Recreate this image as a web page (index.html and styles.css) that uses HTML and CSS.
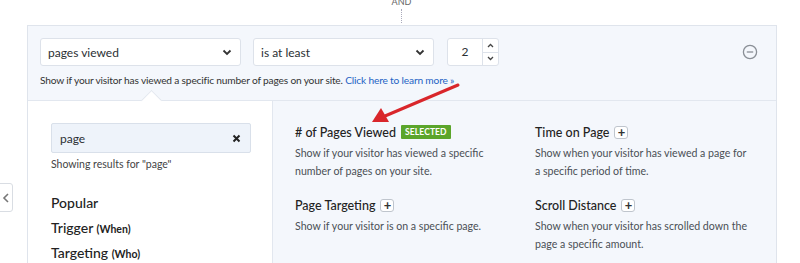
FILE: index.html
```html
<!DOCTYPE html>
<html lang="en">
<head>
  <meta charset="UTF-8" />
  <title>Rule Builder</title>
  <link rel="stylesheet" href="styles.css">
</head>
<body>

  <div class="joiner">
    <span class="joiner-label">AND</span>
    <span class="joiner-line"></span>
  </div>

  <div class="side-tab">
    <svg width="8" height="10" viewBox="0 0 8 10"><path d="M6 1 L2 5 L6 9" fill="none" stroke="#777" stroke-width="1.6"/></svg>
  </div>

  <div class="rule">
    <div class="rule-head">
      <div class="rule-row">
        <div class="select select-wide">
          <span>pages viewed</span>
          <svg class="caret" width="10" height="7" viewBox="0 0 10 7"><path d="M1.5 1.5 L5 5 L8.5 1.5" fill="none" stroke="#333" stroke-width="1.8"/></svg>
        </div>
        <div class="select select-mid">
          <span>is at least</span>
          <svg class="caret" width="10" height="7" viewBox="0 0 10 7"><path d="M1.5 1.5 L5 5 L8.5 1.5" fill="none" stroke="#333" stroke-width="1.8"/></svg>
        </div>
        <div class="number">
          <span class="number-value">2</span>
          <div class="spinner">
            <span><svg width="7" height="5" viewBox="0 0 7 5"><path d="M1 4 L3.5 1.5 L6 4" fill="none" stroke="#444" stroke-width="1.3"/></svg></span>
            <span><svg width="7" height="5" viewBox="0 0 7 5"><path d="M1 1 L3.5 3.5 L6 1" fill="none" stroke="#444" stroke-width="1.3"/></svg></span>
          </div>
        </div>
        <svg class="remove" width="16" height="16" viewBox="0 0 16 16">
          <circle cx="8" cy="8" r="6.6" fill="none" stroke="#8a8f96" stroke-width="1.3"/>
          <line x1="4.8" y1="8" x2="11.2" y2="8" stroke="#8a8f96" stroke-width="1.3"/>
        </svg>
      </div>
      <p class="help">Show if your visitor has viewed a specific number of pages on your site. <a href="#">Click here to learn more »</a></p>
    </div>

    <div class="picker">
      <div class="picker-side">
        <div class="search">
          <span>page</span>
          <svg width="9" height="9" viewBox="0 0 9 9"><path d="M1.5 1.5 L7.5 7.5 M7.5 1.5 L1.5 7.5" stroke="#222" stroke-width="2"/></svg>
        </div>
        <p class="search-note">Showing results for "page"</p>
        <ul class="cats">
          <li>Popular</li>
          <li>Trigger <small>(When)</small></li>
          <li>Targeting <small>(Who)</small></li>
        </ul>
      </div>

      <div class="picker-list">
        <div class="option">
          <h3># of Pages Viewed <span class="badge">SELECTED</span></h3>
          <p>Show if your visitor has viewed a specific number of pages on your site.</p>
        </div>
        <div class="option">
          <h3>Time on Page <span class="add">+</span></h3>
          <p>Show when your visitor has viewed a page for a specific period of time.</p>
        </div>
        <div class="option">
          <h3>Page Targeting <span class="add">+</span></h3>
          <p>Show if your visitor is on a specific page.</p>
        </div>
        <div class="option">
          <h3>Scroll Distance <span class="add">+</span></h3>
          <p>Show when your visitor has scrolled down the page a specific amount.</p>
        </div>
      </div>
    </div>
  </div>

  <!-- annotation arrow -->
  <svg class="arrow" width="800" height="263" viewBox="0 0 800 263">
    <line x1="458" y1="85" x2="385" y2="116" stroke="#d9262b" stroke-width="3" stroke-linecap="round"/>
    <path d="M372 122 L381 108 L389 122 Z" fill="#d9262b"/>
  </svg>

</body>
</html>
```

FILE: styles.css
```css
* {
  box-sizing: border-box;
}

body {
  margin: 0;
  background: #fff;
  font-family: 'Lato', 'Open Sans', sans-serif;
  color: #2b2f33;
  height: 263px;
  overflow: hidden;
  position: relative;
}

.joiner {
  height: 25px;
  display: flex;
  flex-direction: column;
  align-items: center;
  padding-left: 3px;
}

.joiner-label {
  font-size: 9px;
  color: #666;
  margin-top: -4px;
  line-height: 12px;
}

.joiner-line {
  width: 0;
  height: 14px;
  margin-top: 1px;
  border-left: 1px dotted #aab;
}

.side-tab {
  position: absolute;
  left: -1px;
  top: 183px;
  width: 14px;
  height: 29px;
  border: 1px solid #d9dde3;
  border-radius: 0 3px 3px 0;
  background: #fff;
  display: flex;
  align-items: center;
  justify-content: center;
}

.rule {
  margin-left: 27px;
  width: 750px;
  border: 1px solid #dfe4ec;
  background: #f4f7fc;
}

.rule-head {
  padding: 12px 12px 0;
  height: 75px;
  border-bottom: 1px solid #e2e7ef;
}

.rule-row {
  display: flex;
  align-items: center;
  gap: 12px;
}

.select {
  height: 28px;
  background: #fff;
  border: 1px solid #dde2ea;
  border-radius: 3px;
  display: flex;
  align-items: center;
  justify-content: space-between;
  padding: 0 8px 0 7px;
  font-size: 12px;
}

.select-wide {
  width: 201px;
}

.select-mid {
  width: 181px;
}

.number {
  margin-left: 1px;
  width: 52px;
  height: 28px;
  display: flex;
  background: #fff;
  border: 1px solid #dde2ea;
  border-radius: 3px;
}

.number-value {
  flex: 1;
  text-align: center;
  font-size: 12px;
  line-height: 26px;
}

.spinner {
  width: 16px;
  border-left: 1px solid #dde2ea;
  display: flex;
  flex-direction: column;
}

.spinner span {
  flex: 1;
  display: flex;
  align-items: center;
  justify-content: center;
}

.spinner span + span {
  border-top: 1px solid #dde2ea;
}

.remove {
  margin-left: auto;
  margin-right: 6px;
}

.help {
  margin: 8px 0 0;
  font-size: 10.2px;
  letter-spacing: -0.18px;
  color: #333;
}

.help a {
  color: #2563c4;
  text-decoration: none;
}

.picker {
  display: flex;
  height: 200px;
}

.picker-side {
  width: 245px;
  background: #fff;
  padding: 22px 21px 0 23px;
  border-right: 1px solid #e2e7ef;
  position: relative;
}

/* pointer up to the help text */
.picker-side::before {
  content: '';
  position: absolute;
  left: 116px;
  top: -8px;
  width: 14px;
  height: 14px;
  background: #fff;
  border-left: 1px solid #e2e7ef;
  border-top: 1px solid #e2e7ef;
  transform: rotate(45deg);
}

.search {
  height: 30px;
  background: #eef3fa;
  border: 1px solid #d9e0ea;
  border-radius: 2px;
  display: flex;
  align-items: center;
  justify-content: space-between;
  padding: 0 9px 0 8px;
  font-size: 12px;
}

.search-note {
  margin: 5px 0 0;
  font-size: 10.5px;
  color: #444;
}

.cats {
  list-style: none;
  margin: 21px 0 0;
  padding: 0;
}

.cats li {
  font-size: 14px;
  font-weight: 500;
  color: #222;
  line-height: 24.5px;
}

.cats small {
  font-size: 10.5px;
  font-weight: 700;
}

.picker-list {
  flex: 1;
  display: grid;
  grid-template-columns: 240px 225px;
  grid-auto-rows: 73px;
  padding: 22px 0 0 22px;
}

.option h3 {
  margin: 0;
  font-size: 12.5px;
  font-weight: 500;
  color: #222;
  display: flex;
  align-items: center;
  gap: 5px;
  height: 18px;
}

.option p {
  margin: 3px 0 0;
  font-size: 10.6px;
  line-height: 18px;
  color: #4a4f55;
  width: 214px;
}

.option:first-child p,
.option:nth-child(3) p {
  width: 195px;
}

.badge {
  background: #5ba52b;
  color: #fff;
  font-size: 8.5px;
  font-weight: 700;
  letter-spacing: 0.1px;
  padding: 2px 4px;
  border-radius: 1px;
  line-height: 10px;
}

.add {
  width: 14px;
  height: 13px;
  border: 1px solid #bfc5cd;
  border-radius: 3px;
  background: #fff;
  font-size: 13px;
  line-height: 10px;
  text-align: center;
  font-weight: 700;
  color: #333;
}

.arrow {
  position: absolute;
  left: 0;
  top: 0;
  pointer-events: none;
}
```
